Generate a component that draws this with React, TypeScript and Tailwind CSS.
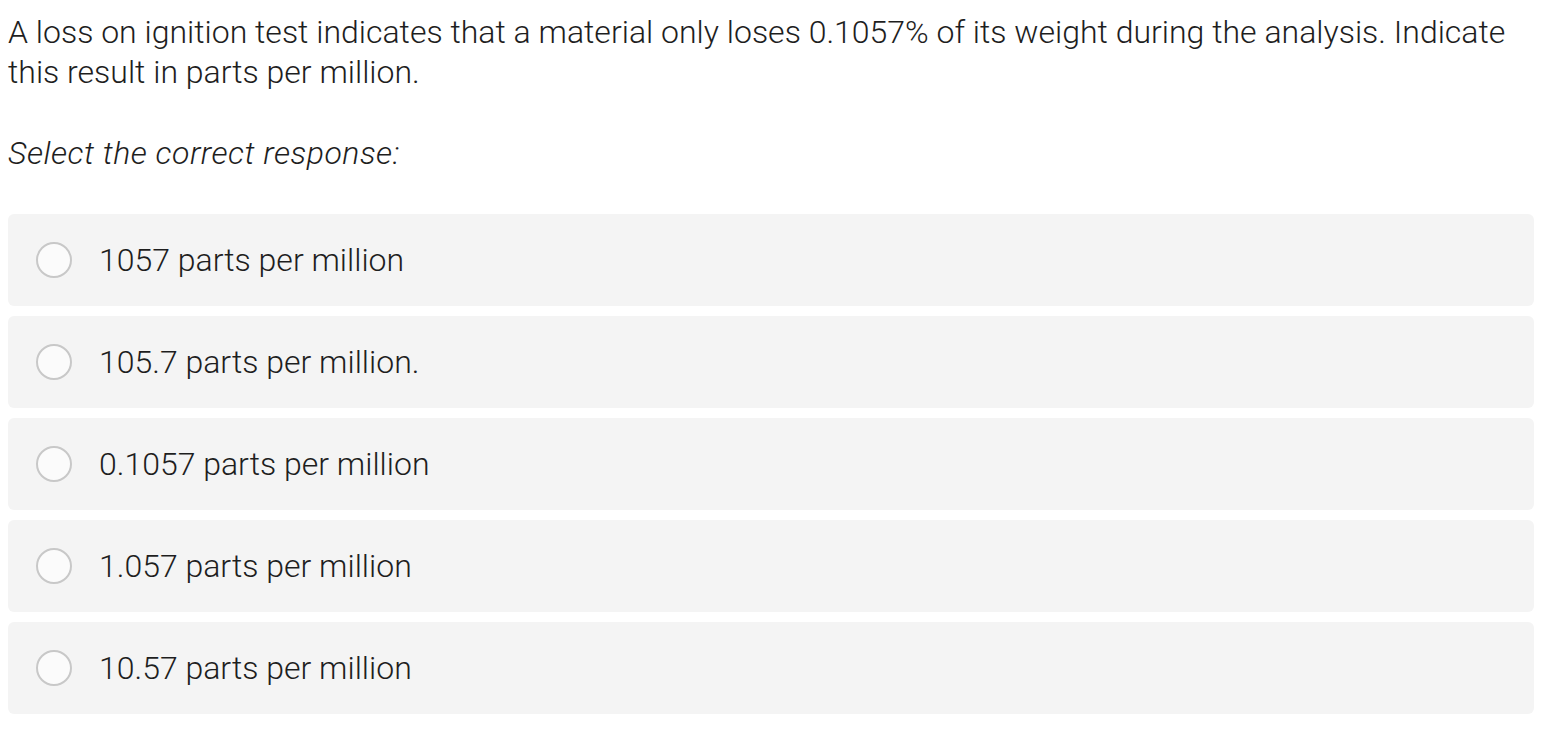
import React from 'react';

const options = [
  '1057 parts per million',
  '105.7 parts per million.',
  '0.1057 parts per million',
  '1.057 parts per million',
  '10.57 parts per million',
];

const Option = ({ label }: { label: string }) => (
  <label className="flex h-[92px] items-center rounded-[6px] bg-[#f4f4f4] pl-[28px]">
    <span className="h-[36px] w-[36px] shrink-0 rounded-full border-2 border-[#c8c8c8] bg-[#fbfbfb]" />
    <span className="ml-[27px] text-[32px] font-light leading-none text-[#1e1e1e]">{label}</span>
  </label>
);

export default function App() {
  return (
    <div className="min-h-[732px] bg-white px-[8px] font-['Roboto',sans-serif]">
      <p className="pt-[12px] text-[32px] font-light leading-[40px] text-[#1e1e1e]">
        A loss on ignition test indicates that a material only loses 0.1057% of its weight during the analysis. Indicate
        this result in parts per million.
      </p>
      <p className="mt-[41px] text-[32px] font-light italic leading-[40px] tracking-[0.5px] text-[#1e1e1e]">
        Select the correct response:
      </p>
      <div className="mt-[41px] flex flex-col gap-[10px] pr-[4px]">
        {options.map((o) => (
          <Option key={o} label={o} />
        ))}
      </div>
    </div>
  );
}
